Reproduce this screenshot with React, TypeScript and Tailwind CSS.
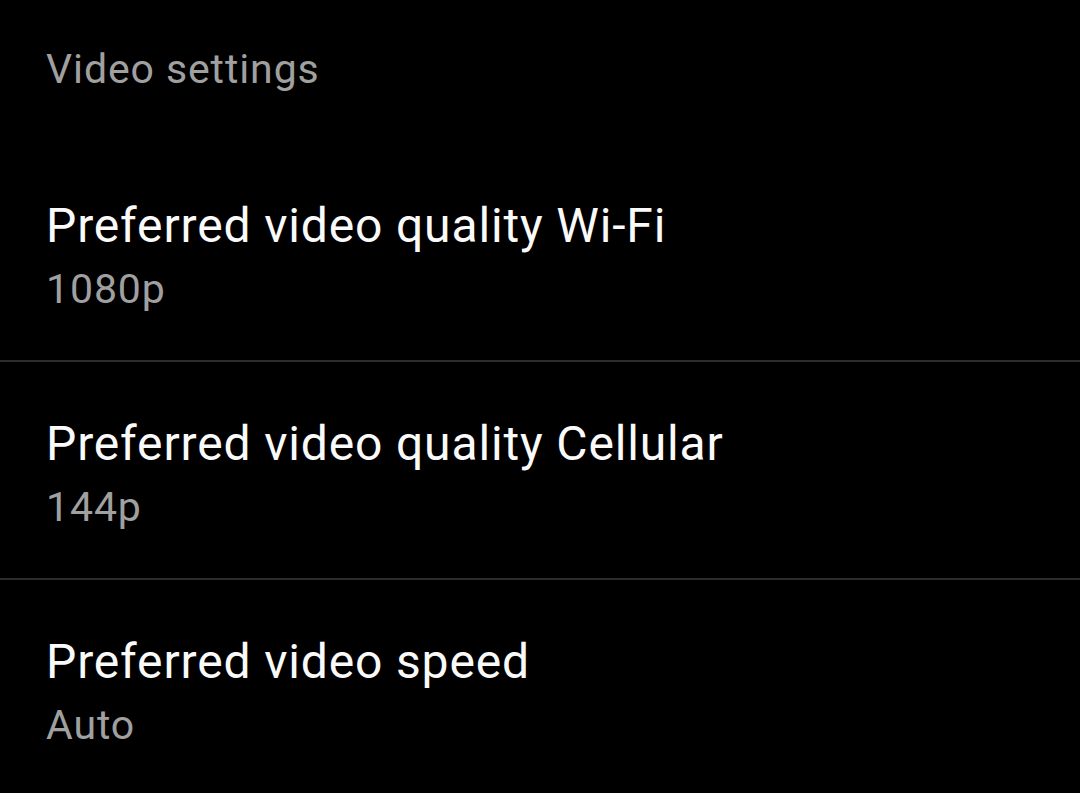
export default function App() {
  const items = [
    { title: "Preferred video quality Wi-Fi", value: "1080p" },
    { title: "Preferred video quality Cellular", value: "144p" },
    { title: "Preferred video speed", value: "Auto" },
  ];
  return (
    <div className="w-[1080px] h-[793px] bg-black overflow-hidden font-['Roboto',sans-serif]">
      <div className="pl-[46px] pt-[45px] h-[144px]">
        <div className="text-[41px] leading-[48px] tracking-[0.9px] text-[#a0a0a0]">Video settings</div>
      </div>
      {items.map((it, i) => (
        <div key={i}>
          {i > 0 && <div className="h-[2px] bg-[#2c2c2c]" />}
          <div className="h-[216px] pl-[46px] pt-[54px]">
            <div className="text-[48px] leading-[56px] tracking-[0.85px] text-[#fafafa]">{it.title}</div>
            <div className="mt-[11px] text-[41px] leading-[48px] tracking-[0.9px] text-[#a0a0a0]">{it.value}</div>
          </div>
        </div>
      ))}
    </div>
  );
}
